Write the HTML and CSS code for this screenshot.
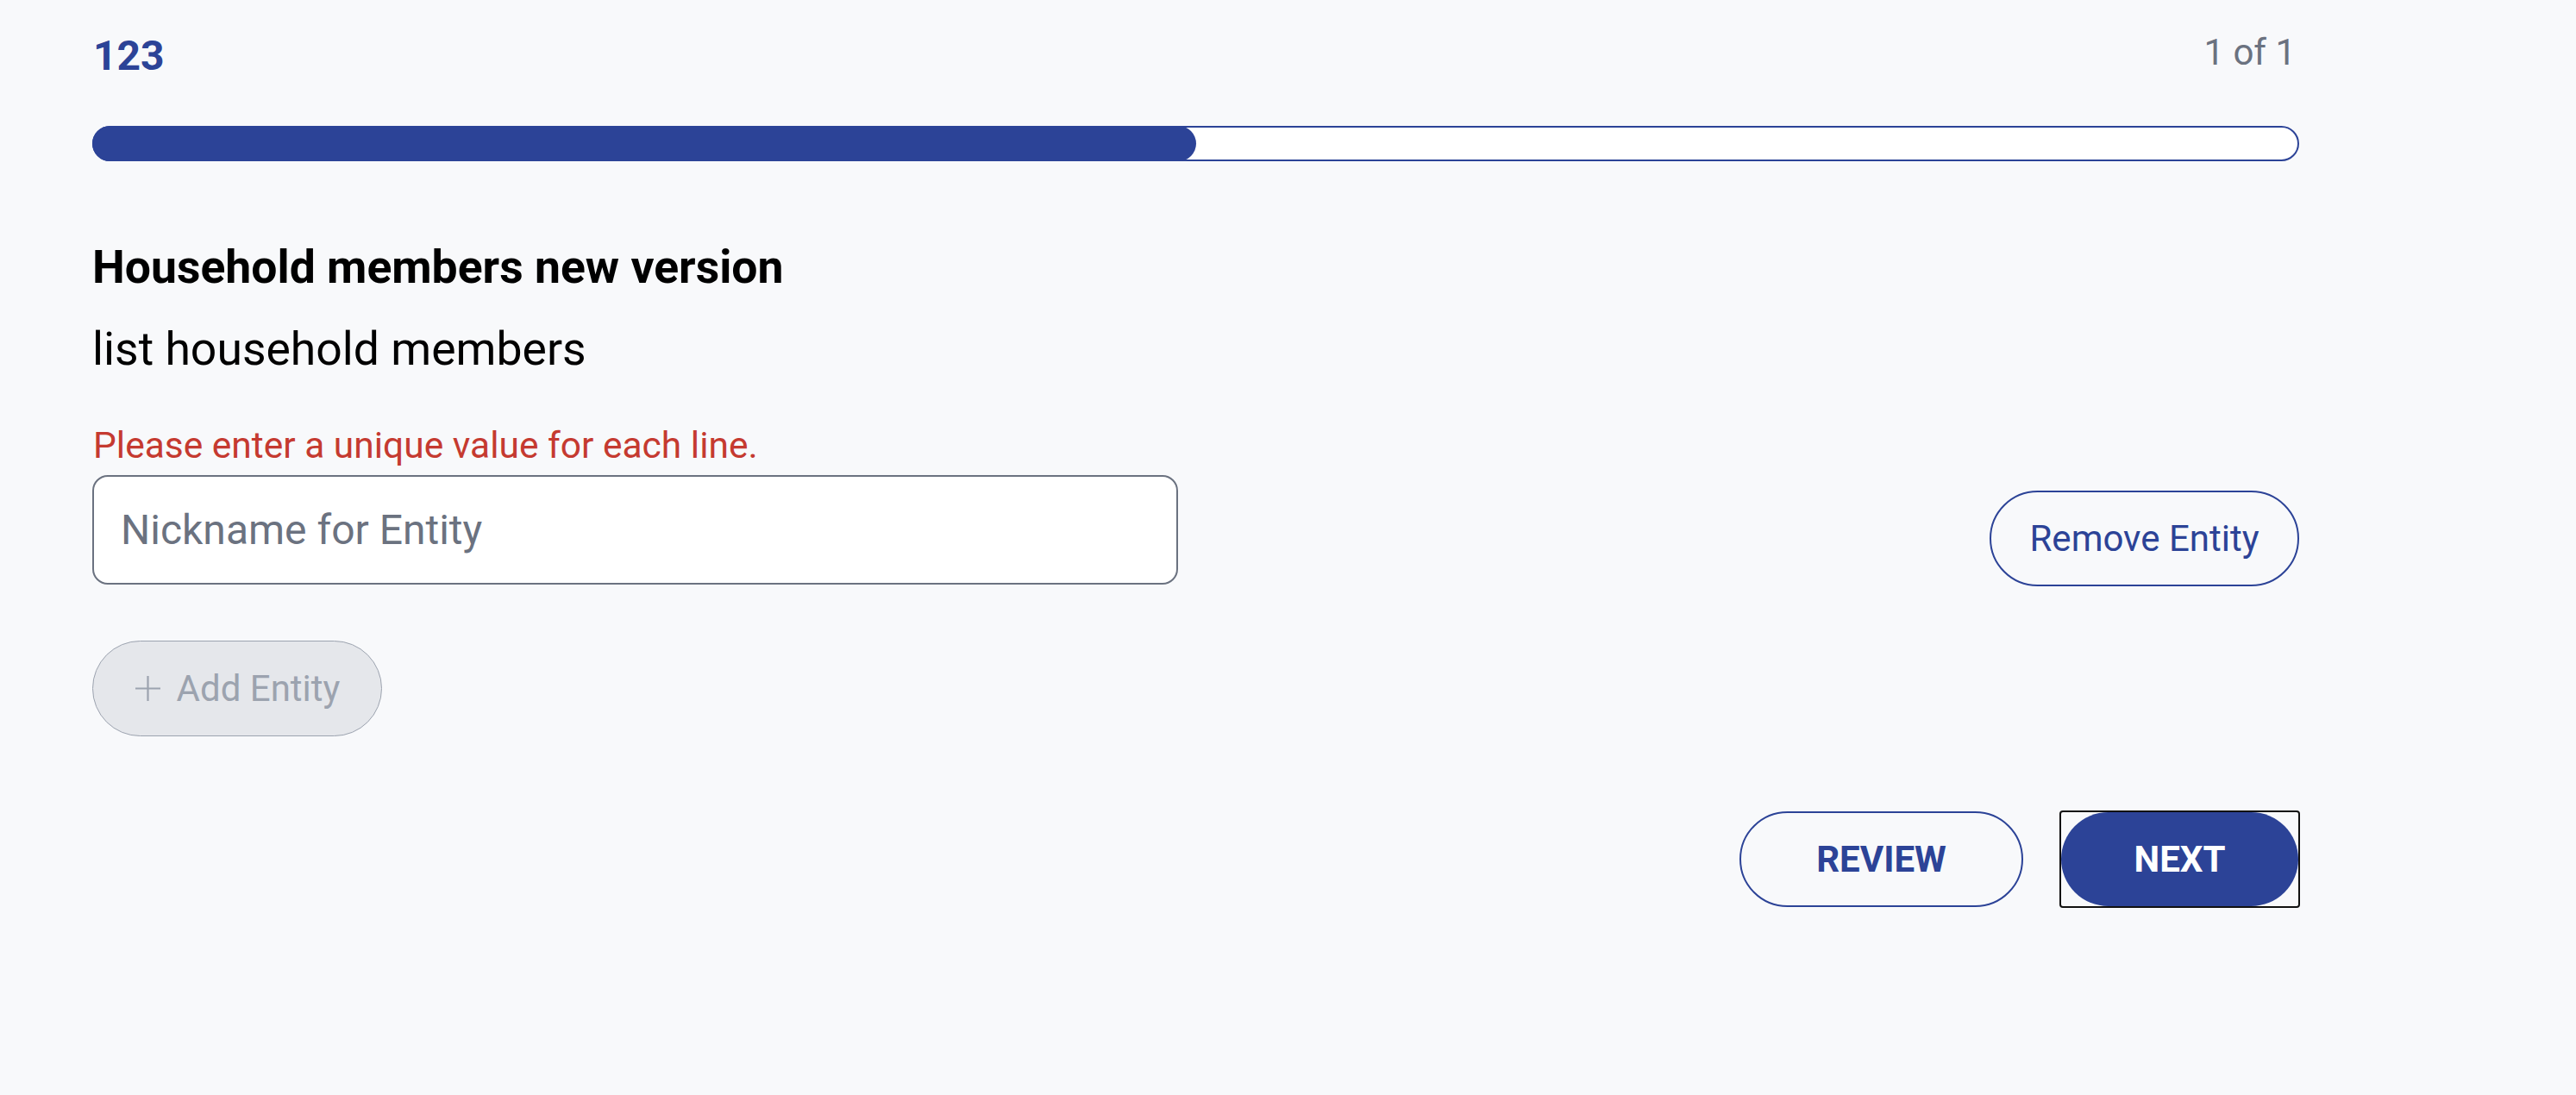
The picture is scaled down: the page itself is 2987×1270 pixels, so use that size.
FILE: index.html
```html
<!DOCTYPE html>
<html lang="en">
<head>
<meta charset="utf-8">
<title>Household members</title>
<link rel="stylesheet" href="styles.css">
</head>
<body>
<main class="page">
  <div class="top">
    <div class="num">123</div>
    <div class="count">1 of 1</div>
  </div>
  <div class="bar"><div class="bar-fill" style="width:50.1%"></div></div>
  <h1 class="title">Household members new version</h1>
  <p class="desc">list household members</p>
  <div class="entity-row">
    <div class="entity-field">
      <div class="error">Please enter a unique value for each line.</div>
      <input class="input" type="text" placeholder="Nickname for Entity">
    </div>
    <button class="btn-remove" type="button">Remove Entity</button>
  </div>
  <button class="btn-add" type="button" disabled>
    <svg class="plus" width="31" height="31" viewBox="0 0 31 31" aria-hidden="true"><path d="M15.5 1v29M1 15.5h29" stroke="currentColor" stroke-width="2.2" fill="none"/></svg>
    <span>Add Entity</span>
  </button>
  <div class="actions">
    <button class="btn-review" type="button">REVIEW</button>
    <div class="focus-ring"><button class="btn-next" type="button">NEXT</button></div>
  </div>
</main>
</body>
</html>
```
FILE: styles.css
```css
* { box-sizing: border-box; }
html, body { margin: 0; padding: 0; background: #f8f9fb; }
body { font-family: Roboto, "Noto Sans", "Liberation Sans", sans-serif; color: #000; }

.page {
  width: 2560px;
  margin-left: 107px;
  padding-top: 38px;
}

.top {
  display: flex;
  justify-content: space-between;
  align-items: flex-start;
  height: 52px;
}
.num {
  font-size: 48px;
  line-height: 1;
  font-weight: 700;
  color: #2c4397;
  margin-top: 3px;
  margin-left: 1px;
}
.count {
  font-size: 42px;
  line-height: 1;
  color: #6b7280;
  margin-top: 2px;
  margin-right: 5px;
}

.bar {
  margin-top: 56px;
  height: 41px;
  width: 2559px;
  border: 2px solid #2c4397;
  border-radius: 999px;
  background: #fff;
}
.bar-fill {
  height: 41px;
  margin: -2px 0 0 -2px;
  background: #2c4397;
  border-radius: 999px;
}

.title {
  margin: 96px 0 0 0;
  font-size: 53.5px;
  line-height: 1;
  font-weight: 700;
}
.desc {
  margin: 41px 0 0 0;
  font-size: 53.5px;
  line-height: 1;
}

.entity-row {
  margin-top: 65px;
  display: flex;
  justify-content: space-between;
  align-items: flex-end;
  width: 2559px;
}
.entity-field { display: flex; flex-direction: column; }
.error {
  font-size: 42.5px;
  line-height: 1;
  color: #c53a30;
  margin-left: 1px;
}
.input {
  margin-top: 12px;
  width: 1259px;
  height: 127px;
  border: 2px solid #6b7280;
  border-radius: 18px;
  background: #fff;
  padding: 0 0 0 31px;
  font-family: inherit;
  font-size: 48px;
  color: #111;
  outline: none;
}
.input::placeholder { color: #6b7280; }

.btn-remove {
  width: 359px;
  height: 111px;
  margin-bottom: -2px;
  border: 2px solid #2c4397;
  border-radius: 999px;
  background: transparent;
  color: #2c4397;
  font-family: inherit;
  font-size: 42px;
  padding: 0;
}

.btn-add {
  margin-top: 65px;
  width: 336px;
  height: 111px;
  display: flex;
  align-items: center;
  justify-content: center;
  gap: 18px;
  border: 1.5px solid #9ca3af;
  border-radius: 999px;
  background: #e5e7eb;
  color: #9ca3af;
  font-family: inherit;
  font-size: 42px;
  padding: 0;
}
.plus { display: block; }

.actions {
  margin-top: 86px;
  display: flex;
  justify-content: flex-end;
  align-items: center;
  gap: 42px;
  width: 2560px;
}
.btn-review {
  width: 329px;
  height: 111px;
  border: 2px solid #2c4397;
  border-radius: 999px;
  background: transparent;
  color: #2c4397;
  font-family: inherit;
  font-size: 42px;
  font-weight: 700;
  padding: 0;
}
.focus-ring {
  border: 2px solid #111;
  border-radius: 4px;
  display: flex;
}
.btn-next {
  width: 275px;
  height: 109px;
  border: 0;
  border-radius: 999px;
  background: #2c4397;
  color: #fff;
  font-family: inherit;
  font-size: 42px;
  font-weight: 700;
  padding: 0;
}
```
